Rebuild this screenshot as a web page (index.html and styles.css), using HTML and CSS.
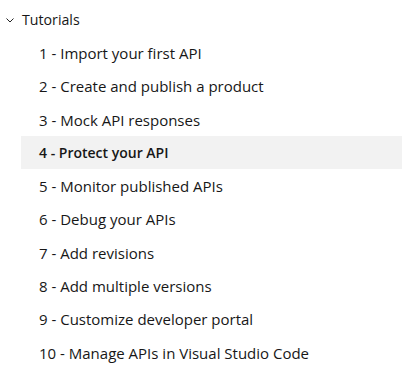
FILE: index.html
```html
<!DOCTYPE html>
<html>
<head>
	<title>Tutorials</title>
	<link rel="stylesheet" href="styles.css">
</head>
<body>
	<nav class="toc">
		<div class="toc-head">
			<svg class="chevron" width="8" height="5" viewBox="0 0 8 5"><path d="M0.5 0.5 L4 4 L7.5 0.5" fill="none" stroke="#222" stroke-width="1"/></svg>
			<span>Tutorials</span>
		</div>
		<ul class="toc-list">
			<li><a href="#">1 - Import your first API</a></li>
			<li><a href="#">2 - Create and publish a product</a></li>
			<li><a href="#">3 - Mock API responses</a></li>
			<li class="active"><a href="#">4 - Protect your API</a></li>
			<li><a href="#">5 - Monitor published APIs</a></li>
			<li><a href="#">6 - Debug your APIs</a></li>
			<li><a href="#">7 - Add revisions</a></li>
			<li><a href="#">8 - Add multiple versions</a></li>
			<li><a href="#">9 - Customize developer portal</a></li>
			<li><a href="#">10 - Manage APIs in Visual Studio Code</a></li>
		</ul>
	</nav>
</body>
</html>
```

FILE: styles.css
```css
*{
	box-sizing: border-box;
}
body{
	margin: 0;
	padding-top: 3px;
	font-family: "Open Sans", "Noto Sans", sans-serif;
	font-size: 15px;
	color: #171717;
	background: #fff;
}
.toc-head{
	display: flex;
	align-items: center;
	height: 33.3px;
	padding-left: 6px;
	font-size: 14.2px;
}
.chevron{
	margin-right: 8px;
	margin-top: 1px;
}
.toc-list{
	list-style: none;
	margin: 0;
	padding: 0 0 0 21px;
}
.toc-list li{
	height: 33.3px;
	display: flex;
	align-items: center;
}
.toc-list a{
	display: block;
	width: 100%;
	padding-left: 18px;
	color: #171717;
	text-decoration: none;
}
.toc-list li.active{
	background: #f2f2f2;
}
.toc-list li.active a{
	font-size: 14px;
	font-weight: 600;
}
```
